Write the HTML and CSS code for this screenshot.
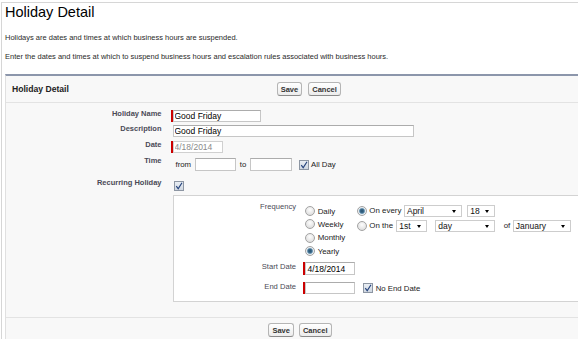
FILE: index.html
```html
<!DOCTYPE html>
<html lang="en">
<head>
    <meta charset="UTF-8">
    <meta name="viewport" content="width=device-width, initial-scale=1.0">
    <title>Holiday Detail</title>
    <link rel="stylesheet" href="styles.css">
</head>
<body>

<div class="page">
    <h1>Holiday Detail</h1>
    <p class="intro">Holidays are dates and times at which business hours are suspended.</p>
    <p class="intro second">Enter the dates and times at which to suspend business hours and escalation rules associated with business hours.</p>

    <div class="block">
        <div class="block-header">
            <h2>Holiday Detail</h2>
            <div class="buttons">
                <button class="btn">Save</button>
                <button class="btn">Cancel</button>
            </div>
        </div>

        <div class="form">
            <div class="row">
                <label class="lbl">Holiday Name</label>
                <div class="field req"><input class="txt w-name" value="Good Friday"></div>
            </div>
            <div class="row">
                <label class="lbl">Description</label>
                <div class="field"><input class="txt w-desc" value="Good Friday"></div>
            </div>
            <div class="row row-date">
                <label class="lbl">Date</label>
                <div class="field req"><input class="txt w-date muted" value="4/18/2014"></div>
            </div>
            <div class="row row-time">
                <label class="lbl">Time</label>
                <div class="field time">
                    <span class="from">from</span>
                    <input class="txt w-time">
                    <span class="to">to</span>
                    <input class="txt w-time to-input">
                    <span class="check all-day"><svg width="8" height="8" viewBox="0 0 8 8"><path d="M1.3 4.2 L3.2 6.8 L7 0.8" fill="none" stroke="#24427c" stroke-width="1.2"/></svg></span>
                    <span class="check-text">All Day</span>
                </div>
            </div>
            <div class="row row-recur">
                <label class="lbl">Recurring Holiday</label>
                <div class="field recur-check">
                    <span class="check"><svg width="8" height="8" viewBox="0 0 8 8"><path d="M1.3 4.2 L3.2 6.8 L7 0.8" fill="none" stroke="#24427c" stroke-width="1.2"/></svg></span>
                </div>
            </div>

            <!-- recurrence settings -->
            <div class="recur-box">
                <div class="irow">
                    <span class="ilbl">Frequency</span>
                    <div class="freq-opts">
                        <div class="opt"><span class="radio"></span><span class="opt-text">Daily</span></div>
                        <div class="opt"><span class="radio"></span><span class="opt-text">Weekly</span></div>
                        <div class="opt"><span class="radio"></span><span class="opt-text">Monthly</span></div>
                        <div class="opt"><span class="radio on"></span><span class="opt-text">Yearly</span></div>
                    </div>
                    <div class="yearly-opts">
                        <div class="opt2">
                            <span class="radio on"></span>
                            <span class="opt-text">On every</span>
                            <span class="sel s-month">April</span>
                            <span class="sel s-day">18</span>
                        </div>
                        <div class="opt2">
                            <span class="radio"></span>
                            <span class="opt-text">On the</span>
                            <span class="sel s-nth">1st</span>
                            <span class="sel s-unit">day</span>
                            <span class="of">of</span>
                            <span class="sel s-month2">January</span>
                        </div>
                    </div>
                </div>
                <div class="irow date-row">
                    <span class="ilbl">Start Date</span>
                    <div class="field req"><input class="txt w-date2" value="4/18/2014"></div>
                </div>
                <div class="irow date-row end-row">
                    <span class="ilbl">End Date</span>
                    <div class="field req"><input class="txt w-date2"></div>
                    <span class="check no-end"><svg width="8" height="8" viewBox="0 0 8 8"><path d="M1.3 4.2 L3.2 6.8 L7 0.8" fill="none" stroke="#24427c" stroke-width="1.2"/></svg></span>
                    <span class="check-text">No End Date</span>
                </div>
            </div>
        </div>

        <div class="block-footer">
            <button class="btn">Save</button>
            <button class="btn">Cancel</button>
        </div>
    </div>
</div>

</body>
</html>
```

FILE: styles.css
```css
* {
    box-sizing: border-box;
}

body {
    margin: 0;
    overflow: hidden;
    background-color: #fff;
    font-family: "Liberation Sans", Arial, sans-serif;
    font-size: 7.5px;
    color: #222;
}

.page {
    display: flex;
    flex-direction: column;
    margin: 2px 0 0 1px;
    height: 337px;
    border: 1px solid #d6d6d6;
    border-right: none;
    border-bottom: none;
    padding-left: 3px;
    overflow: hidden;
}

h1 {
    margin: 0;
    font-size: 14.5px;
    font-weight: normal;
    line-height: 18px;
    color: #000;
}

.intro {
    margin: 12px 0 0;
    line-height: 10px;
    color: #2a2a2a;
}

.intro.second {
    margin-top: 8.5px;
}

/* page block */
.block {
    flex: 1;
    margin-top: 12.5px;
    border-top: 2px solid #8c96ab;
    border-left: 1px solid #e0e0e0;
    background-color: #f8f8f8;
}

.block-header {
    display: flex;
    align-items: center;
    height: 27px;
    border-bottom: 1px solid #e3e3e3;
}

h2 {
    margin: 0;
    width: 270.7px;
    padding-left: 6px;
    font-size: 8.6px;
    font-weight: bold;
    color: #222;
}

.buttons {
    display: flex;
    gap: 6px;
}

.btn {
    height: 14px;
    margin: 0;
    padding: 0 3px;
    font-family: "Liberation Sans", Arial, sans-serif;
    font-size: 7.5px;
    font-weight: bold;
    color: #333;
    border: 1px solid #b5b5b5;
    border-bottom-color: #8a8a8a;
    border-radius: 3px;
    background: linear-gradient(#ffffff, #ececec);
}

.form {
    padding: 7px 0 14.4px;
}

.row {
    display: flex;
    align-items: flex-start;
}

.row + .row {
    margin-top: 3px;
}

.row.row-date {
    margin-top: 3.5px;
}

.row.row-time {
    margin-top: 4px;
}

.row.row-recur {
    margin-top: 7.7px;
}

.lbl {
    flex-shrink: 0;
    width: 164.5px;
    padding-right: 9px;
    text-align: right;
    font-weight: bold;
    color: #4a4a56;
    line-height: 8px;
}

.field {
    display: flex;
    align-items: center;
    padding-left: 2px;
}

.field.req {
    padding-left: 0;
    border-left: 2px solid #c00;
}

.txt {
    height: 12px;
    margin: 0;
    padding: 0 1px;
    border: 1px solid #c6c6c6;
    border-top-color: #acacac;
    background-color: #fff;
    font-family: "Liberation Sans", Arial, sans-serif;
    font-size: 8.5px;
    color: #000;
}

.txt.muted {
    height: 12.5px;
    color: #8a8a8a;
    border-color: #d0d0d0;
}

.w-name { width: 88.5px; }
.w-desc { width: 241.6px; }
.w-date { width: 50.2px; }
.w-time { width: 41.7px; height: 13px; }
.w-date2 { width: 49.7px; height: 12.5px; }

.time {
    margin-top: 1.3px;
    font-size: 7.8px;
}

.from { margin-left: 3px; }
.time .w-time { margin-left: 3.5px; }
.to { margin-left: 3.5px; }
.time .to-input { margin-left: 4px; }
.all-day { margin-left: 6.5px; }

.check {
    display: inline-flex;
    align-items: center;
    justify-content: center;
    flex-shrink: 0;
    width: 10px;
    height: 10px;
    border: 1px solid #8d96a3;
    background: linear-gradient(#e9eef4, #cfd7e1);
}

.check-text {
    margin-left: 2.5px;
    font-size: 7.8px;
}

.recur-check {
    margin-top: 2px;
}

.recur-check .check {
    margin-left: 1.2px;
}

/* recurrence box */
.recur-box {
    margin: 4px -20px 0 167.3px;
    padding: 7px 0 7px;
    border: 1px solid #d3d3d3;
    border-right: none;
    background-color: #fff;
}

.irow {
    display: flex;
    align-items: flex-start;
}

.irow.date-row {
    margin-top: 4.6px;
}

.irow.end-row {
    margin-top: 7px;
    align-items: center;
}

.ilbl {
    flex-shrink: 0;
    width: 129.2px;
    padding-right: 7.5px;
    text-align: right;
    color: #4a4a56;
    line-height: 8px;
    font-size: 7.6px;
}

.date-row .ilbl {
    padding-top: 1px;
}

.end-row .ilbl {
    align-self: flex-start;
}

.freq-opts {
    width: 53.2px;
    margin-top: 1.5px;
    padding-left: 1.5px;
}

.opt {
    display: flex;
    align-items: center;
    height: 13.3px;
}

.opt-text {
    margin-left: 2.7px;
    font-size: 7.9px;
    color: #222;
}

.radio {
    flex-shrink: 0;
    width: 10px;
    height: 10px;
    border-radius: 50%;
    border: 1px solid #a3a3a3;
    background: radial-gradient(circle at 50% 35%, #fdfdfd, #d6d6d6);
}

.radio.on {
    background: radial-gradient(circle, #244e6c 0, #3f6f90 2px, #8fb0c6 2.8px, #eef2f5 3.3px, #cfd8de 100%);
}

.yearly-opts {
    margin-top: 0.5px;
}

.opt2 {
    display: flex;
    align-items: center;
    height: 15px;
}

.sel {
    display: flex;
    align-items: center;
    justify-content: space-between;
    height: 12px;
    padding: 0 5px 0 2px;
    border: 1px solid #cdcdcd;
    background-color: #fff;
    font-size: 8.5px;
    color: #111;
}

.sel::after {
    content: "";
    margin-top: 2px;
    border-left: 2.5px solid transparent;
    border-right: 2.5px solid transparent;
    border-top: 3px solid #000;
}

.s-month { width: 58px; margin-left: 2.6px; }
.s-day { width: 27.3px; margin-left: 5.4px; }
.s-nth { width: 30.7px; margin-left: 3.3px; height: 11.5px; }
.s-unit { width: 60px; margin-left: 8.3px; height: 11.5px; }
.of { margin-left: 8.3px; font-size: 7.8px; }
.s-month2 { width: 58.3px; margin-left: 2.7px; height: 11.5px; }

.no-end {
    margin-left: 8px;
}

.block-footer {
    display: flex;
    justify-content: center;
    gap: 5px;
    padding: 5.8px 0 0 16px;
    border-top: 1px solid #e3e3e3;
}
```
